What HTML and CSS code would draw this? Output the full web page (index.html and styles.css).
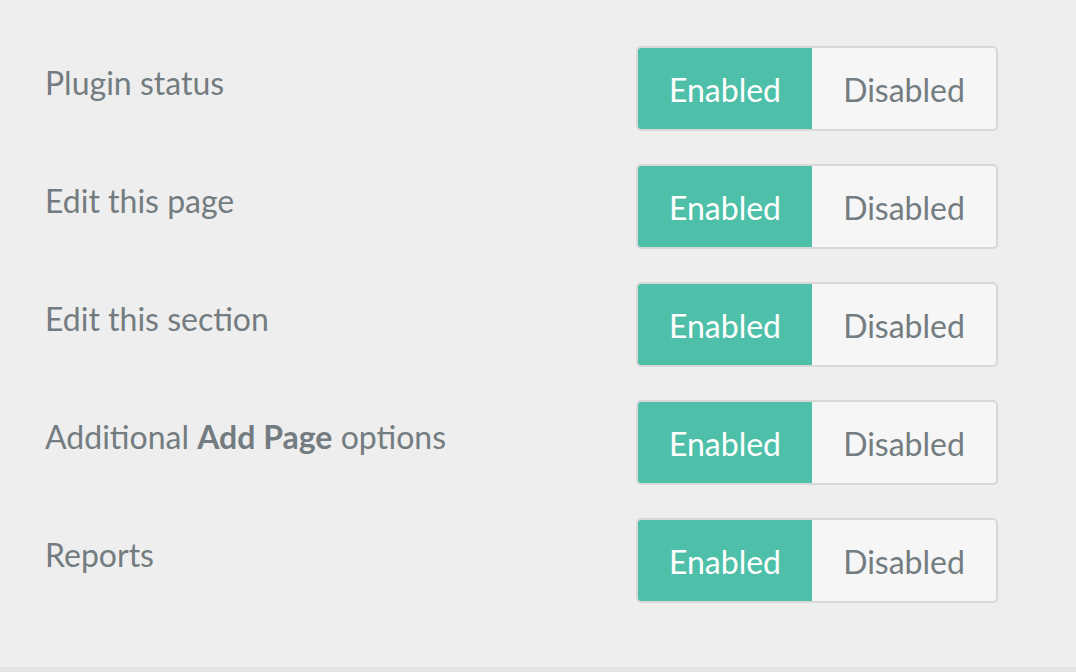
FILE: index.html
```html
<!DOCTYPE html>
<html>
<head>
<meta charset="utf-8">
<link rel="stylesheet" href="styles.css">
</head>
<body>
<div class="page">
  <div class="settings">
    <div class="row">
      <div class="label">Plugin status</div>
      <div class="toggle"><span class="opt on">Enabled</span><span class="opt off">Disabled</span></div>
    </div>
    <div class="row">
      <div class="label">Edit this page</div>
      <div class="toggle"><span class="opt on">Enabled</span><span class="opt off">Disabled</span></div>
    </div>
    <div class="row">
      <div class="label">Edit this section</div>
      <div class="toggle"><span class="opt on">Enabled</span><span class="opt off">Disabled</span></div>
    </div>
    <div class="row">
      <div class="label">Additional <b>Add Page</b> options</div>
      <div class="toggle"><span class="opt on">Enabled</span><span class="opt off">Disabled</span></div>
    </div>
    <div class="row">
      <div class="label">Reports</div>
      <div class="toggle"><span class="opt on">Enabled</span><span class="opt off">Disabled</span></div>
    </div>
  </div>
</div>
<div class="footer"></div>
</body>
</html>
```
FILE: styles.css
```css
html, body {
  margin: 0;
  padding: 0;
  background: #eeeeee;
  font-family: Lato, "Open Sans", sans-serif;
}
.page {
  height: 667px;
  box-sizing: border-box;
  padding: 46px 0 0 45px;
}
.settings {
  display: flex;
  flex-direction: column;
  gap: 33px;
}
.row {
  display: grid;
  grid-template-columns: 591px auto;
  height: 85px;
}
.label {
  font-size: 32px;
  color: #737c80;
  line-height: 1;
  padding-top: 21px;
}
.label b {
  font-weight: 700;
}
.toggle {
  display: flex;
  width: 362px;
  height: 85px;
  box-sizing: border-box;
  border: 2px solid #d8d8d8;
  border-radius: 5px;
  overflow: hidden;
  background: #f6f6f6;
}
.opt {
  display: flex;
  align-items: center;
  justify-content: center;
  font-size: 32px;
  padding-top: 2px;
  box-sizing: border-box;
}
.on {
  width: 174px;
  background: #4ebfa8;
  color: #ffffff;
}
.off {
  flex: 1;
  color: #737c80;
}
.footer {
  height: 5px;
  background: #e5e5e5;
}
```
